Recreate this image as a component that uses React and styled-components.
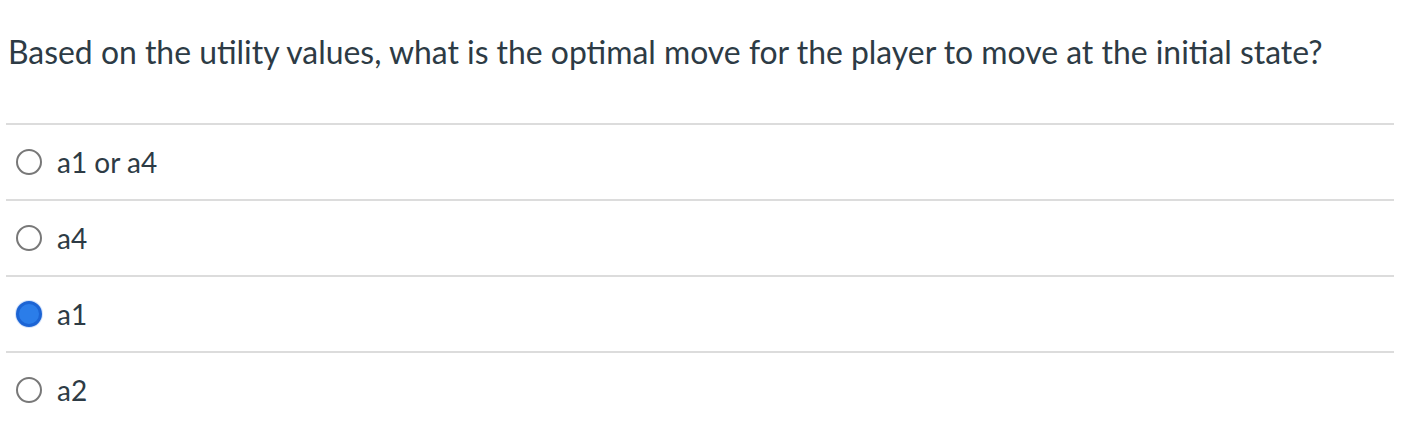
import React, { useState } from "react";
import styled, { createGlobalStyle } from "styled-components";

const GlobalStyle = createGlobalStyle`
  body {
    margin: 0;
    background: #ffffff;
    font-family: Lato, "Liberation Sans", sans-serif;
    color: #2d3b45;
  }
`;

const Container = styled.div`
  width: 1414px;
  height: 440px;
  overflow: hidden;
`;

const Question = styled.p`
  margin: 0;
  padding: 32px 0 0 8px;
  height: 123px;
  box-sizing: border-box;
  font-size: 31.9px;
  line-height: 40px;
  color: #2d3b45;
`;

const Answers = styled.div`
  display: flex;
  flex-direction: column;
  width: 1388px;
  margin-left: 6px;
`;

const Answer = styled.label`
  display: flex;
  align-items: center;
  gap: 15px;
  height: 76px;
  box-sizing: border-box;
  border-top: 2px solid #dcdcdc;
  padding: 0 0 0 10px;
  font-size: 28px;
  cursor: pointer;
`;

const Radio = styled.span`
  width: 26px;
  height: 26px;
  box-sizing: border-box;
  border-radius: 50%;
  border: ${(p) => (p.checked ? "3px solid #1c64d4" : "2px solid #787878")};
  background: ${(p) => (p.checked ? "#2b7de9" : "#ffffff")};
  box-shadow: ${(p) => (p.checked ? "0 0 0 1px #d6e4fb" : "none")};
`;

const options = ["a1 or a4", "a4", "a1", "a2"];

const App = () => {
  const [selected, setSelected] = useState("a1");

  return (
    <Container>
      <GlobalStyle />
      <Question>
        Based on the utility values, what is the optimal move for the player to
        move at the initial state?
      </Question>
      <Answers>
        {options.map((option) => (
          <Answer key={option} onClick={() => setSelected(option)}>
            <Radio checked={selected === option} />
            {option}
          </Answer>
        ))}
      </Answers>
    </Container>
  );
};

export default App;
